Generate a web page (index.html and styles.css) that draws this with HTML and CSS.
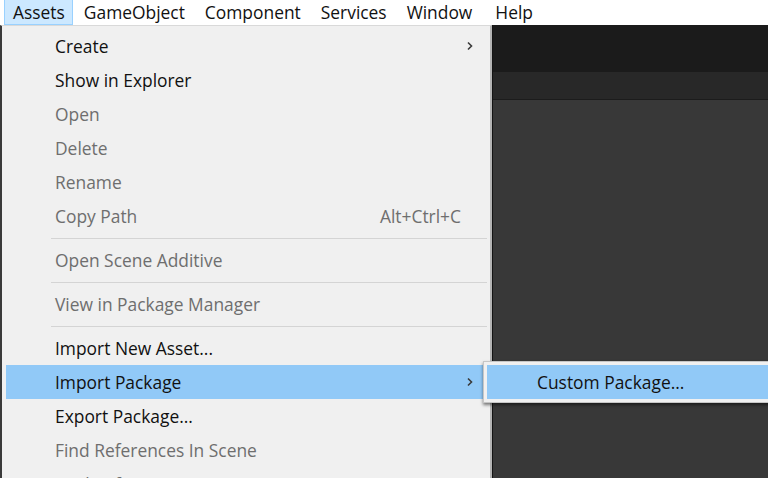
FILE: index.html
```html
<!DOCTYPE html>
<html>
<head>
<meta charset="utf-8">
<link rel="stylesheet" href="styles.css">
</head>
<body>
<div class="menubar">
  <span class="mb-item active">Assets</span>
  <span class="mb-item">GameObject</span>
  <span class="mb-item">Component</span>
  <span class="mb-item">Services</span>
  <span class="mb-item">Window</span>
  <span class="mb-item help">Help</span>
</div>
<div class="workspace">
  <div class="dropdown">
    <div class="row"><span class="label">Create</span><svg class="chev" width="8" height="10" viewBox="0 0 8 10"><path d="M2 1.5 L5.5 5 L2 8.5" fill="none" stroke="#3a3a3a" stroke-width="1.6"/></svg></div>
    <div class="row"><span class="label">Show in Explorer</span></div>
    <div class="row disabled"><span class="label">Open</span></div>
    <div class="row disabled"><span class="label">Delete</span></div>
    <div class="row disabled"><span class="label">Rename</span></div>
    <div class="row disabled"><span class="label">Copy Path</span><span class="shortcut">Alt+Ctrl+C</span></div>
    <div class="sep"></div>
    <div class="row disabled"><span class="label">Open Scene Additive</span></div>
    <div class="sep"></div>
    <div class="row disabled"><span class="label">View in Package Manager</span></div>
    <div class="sep"></div>
    <div class="row"><span class="label">Import New Asset...</span></div>
    <div class="row hover"><span class="label">Import Package</span><svg class="chev" width="8" height="10" viewBox="0 0 8 10"><path d="M2 1.5 L5.5 5 L2 8.5" fill="none" stroke="#3a3a3a" stroke-width="1.6"/></svg>
      <div class="submenu"><div class="sub-row">Custom Package...</div></div>
    </div>
    <div class="row"><span class="label">Export Package...</span></div>
    <div class="row disabled"><span class="label">Find References In Scene</span></div>
    <div class="row disabled"><span class="label">Find References In Project</span></div>
  </div>
  <div class="editor">
    <div class="band1"></div>
    <div class="band2"></div>
    <div class="band3"></div>
  </div>
</div>
</body>
</html>
```
FILE: styles.css
```css
html, body {
  margin: 0;
  padding: 0;
}
body {
  width: 768px;
  height: 478px;
  overflow: hidden;
  font-family: "Open Sans", "Noto Sans", sans-serif;
  font-size: 17.4px;
  color: #111;
  background: #383838;
}
.menubar {
  height: 25px;
  background: #ffffff;
  display: flex;
  align-items: stretch;
  padding-left: 4px;
  gap: 2px;
}
.mb-item {
  display: flex;
  align-items: center;
  padding: 1px 8px 0 8px;
  border: 1px solid transparent;
  border-top: 0;
  line-height: 1;
}
.mb-item.active {
  padding-right: 7px;
}
.mb-item.help {
  margin-left: 3px;
}
.mb-item.active {
  background: #cce8ff;
  border-color: #99d1ff;
}
.workspace {
  display: flex;
  height: 453px;
}
.dropdown {
  width: 488px;
  background: #f0f0f0;
  border-left: 2px solid #3a3a3a;
  border-right: 2px solid #b4b4b4;
  border-top: 1px solid #d9d9d9;
  padding: 3px 0 0 0;
  box-sizing: content-box;
}
.row {
  position: relative;
  height: 34px;
  display: flex;
  align-items: center;
  margin: 0 2px 0 4px;
  padding-left: 49px;
  padding-right: 14px;
}
.row .label {
  flex: 1;
  white-space: nowrap;
}
.row.disabled {
  color: #6e6e6e;
}
.row.hover {
  background: #91c9f7;
}
.shortcut {
  margin-right: 13px;
}
.chev {
  display: block;
}
.sep {
  height: 10px;
  display: flex;
  align-items: center;
  margin: 0 3px 0 49px;
}
.sep::before {
  content: "";
  flex: 1;
  height: 1px;
  background: #d4d4d4;
}
.submenu {
  position: absolute;
  left: 477px;
  top: -4px;
  width: 290px;
  height: 34px;
  background: #f0f0f0;
  border: 1px solid #c6c6c6;
  padding: 3px;
  box-shadow: 0 2px 3px rgba(0,0,0,0.5);
}
.sub-row {
  height: 34px;
  background: #91c9f7;
  display: flex;
  align-items: center;
  padding-left: 50px;
  color: #111;
}
.editor {
  flex: 1;
  display: flex;
  flex-direction: column;
  border-left: 1px solid #141414;
}
.band1 {
  height: 47px;
  background: #1b1b1b;
}
.band2 {
  height: 27px;
  background: #282828;
  border-bottom: 1px solid #1c1c1c;
}
.band3 {
  flex: 1;
  background: #383838;
}
```
